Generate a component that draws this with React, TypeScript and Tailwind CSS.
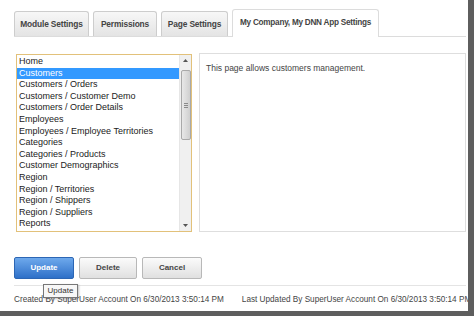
const items = [
  "Home",
  "Customers",
  "Customers / Orders",
  "Customers / Customer Demo",
  "Customers / Order Details",
  "Employees",
  "Employees / Employee Territories",
  "Categories",
  "Categories / Products",
  "Customer Demographics",
  "Region",
  "Region / Territories",
  "Region / Shippers",
  "Region / Suppliers",
  "Reports",
];

const tabs = [
  { label: "Module Settings", w: "w-[75px]" },
  { label: "Permissions", w: "w-[64px]" },
  { label: "Page Settings", w: "w-[67px]" },
];

function Scrollbar() {
  return (
    <div className="w-[12px] shrink-0 bg-[#f0f0f0] border-l border-[#e6e6e6] flex flex-col items-center">
      {/* up arrow */}
      <div className="h-[11px] w-full flex items-center justify-center">
        <svg width="5" height="3" viewBox="0 0 5 3">
          <path d="M0 3 L2.5 0 L5 3 Z" fill="#555" />
        </svg>
      </div>
      {/* thumb */}
      <div className="mt-[4px] h-[70px] w-[10px] rounded-[2px] border border-[#a9a9a9] bg-gradient-to-r from-[#e8e8e8] via-[#dcdcdc] to-[#cfcfcf] flex flex-col items-center justify-center gap-[1px]">
        <div className="h-px w-[4px] bg-[#8a8a8a]" />
        <div className="h-px w-[4px] bg-[#8a8a8a]" />
        <div className="h-px w-[4px] bg-[#8a8a8a]" />
      </div>
      <div className="flex-1" />
      <div className="h-[11px] w-full flex items-center justify-center">
        <svg width="5" height="3" viewBox="0 0 5 3">
          <path d="M0 0 L2.5 3 L5 0 Z" fill="#555" />
        </svg>
      </div>
    </div>
  );
}

export default function App() {
  return (
    <div
      className="relative w-[474px] h-[316px] overflow-hidden bg-white border-r-[6px] border-b-[5px] border-[#5e5e5e]"
      style={{ fontFamily: '"Liberation Sans", Arial, sans-serif' }}
    >
      <div className="pl-[14px] pt-[9px]">
        {/* Tabs */}
        <div className="flex items-end gap-[4px] w-[452px] h-[28px] border-b border-[#dcdcdc]">
          {tabs.map((t) => (
            <div
              key={t.label}
              className={`${t.w} h-[25px] flex items-center justify-center rounded-t-[3px] border border-b-0 border-[#cdcdcd] bg-gradient-to-b from-[#f7f7f7] to-[#e4e4e4] text-[8.4px] font-bold text-[#444] tracking-[-0.15px]`}
            >
              {t.label}
            </div>
          ))}
          <div className="w-[147px] h-[28px] -mb-px flex items-center justify-center rounded-t-[3px] border border-b-0 border-[#dcdcdc] bg-white text-[8.2px] font-bold text-[#444] tracking-[-0.25px]">
            My Company, My DNN App Settings
          </div>
        </div>

        {/* Body */}
        <div className="flex items-start gap-[7px] mt-[17px]">
          <div className="ml-[2px] w-[176px] h-[178px] border border-[#e2c17a] flex bg-white">
            <div className="flex-1 pt-[1px] overflow-hidden">
              {items.map((it) => (
                <div
                  key={it}
                  className={`h-[11.6px] leading-[11.6px] pl-[2px] text-[9px] whitespace-nowrap ${
                    it === "Customers" ? "bg-[#3399ff] text-white" : "text-[#222]"
                  }`}
                >
                  {it}
                </div>
              ))}
            </div>
            <Scrollbar />
          </div>
          <div className="-mt-px w-[267px] h-[179px] border border-[#dedede] px-[6px] pt-[8px] text-[8.5px] text-[#444]">
            This page allows customers management.
          </div>
        </div>

        {/* Buttons */}
        <div className="flex gap-[5px] mt-[25px]">
          <button className="w-[60px] h-[22px] rounded-[2px] border border-[#2c66b4] bg-gradient-to-b from-[#6ea9ec] to-[#2e70c8] text-white text-[8px] font-bold">
            Update
          </button>
          <button className="w-[58px] h-[22px] rounded-[2px] border border-[#b8b8b8] bg-gradient-to-b from-[#fbfbfb] to-[#e0e0e0] text-[#444] text-[8px] font-bold">
            Delete
          </button>
          <button className="w-[60px] h-[22px] rounded-[2px] border border-[#b8b8b8] bg-gradient-to-b from-[#fbfbfb] to-[#e0e0e0] text-[#444] text-[8px] font-bold">
            Cancel
          </button>
        </div>

        {/* Footer */}
        <div className="mt-[6px] w-[452px] border-t border-[#e4e4e4]" />
        <div className="flex gap-[18px] mt-[8px] text-[8.2px] text-[#444] whitespace-nowrap">
          <span>Created By SuperUser Account On 6/30/2013 3:50:14 PM</span>
          <span>Last Updated By SuperUser Account On 6/30/2013 3:50:14 PM</span>
        </div>
      </div>

      {/* Tooltip */}
      <div className="absolute left-[43px] top-[284px] w-[35px] h-[14px] border border-[#777] bg-[#f7f7f7] shadow-[1px_1px_2px_rgba(0,0,0,0.25)] flex items-center justify-center text-[8px] text-[#333]">
        Update
      </div>
    </div>
  );
}
